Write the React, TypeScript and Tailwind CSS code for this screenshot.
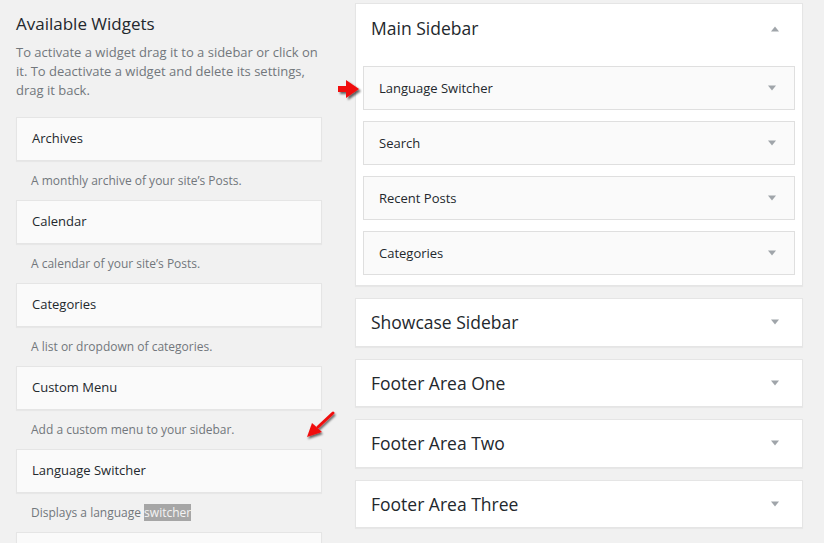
import React from "react";

const font = "font-['Open_Sans',_'Noto_Sans',_sans-serif]";

function Caret({ up = false }: { up?: boolean }) {
  return (
    <svg width="10" height="6" viewBox="0 0 10 6" className="shrink-0">
      {up ? (
        <path d="M1 5.5 L5 0.5 L9 5.5 Z" fill="#a0a5aa" />
      ) : (
        <path d="M1 0.5 L9 0.5 L5 5.5 Z" fill="#a0a5aa" />
      )}
    </svg>
  );
}

const available = [
  { t: "Archives", d: "A monthly archive of your site’s Posts." },
  { t: "Calendar", d: "A calendar of your site’s Posts." },
  { t: "Categories", d: "A list or dropdown of categories." },
  { t: "Custom Menu", d: "Add a custom menu to your sidebar." },
  { t: "Language Switcher", d: "LANG" },
  { t: "", d: "" },
];

const mainWidgets = ["Language Switcher", "Search", "Recent Posts", "Categories"];
const sidebars = ["Showcase Sidebar", "Footer Area One", "Footer Area Two", "Footer Area Three"];

export default function App() {
  return (
    <div className={`relative w-[824px] h-[543px] overflow-hidden bg-[#f1f1f1] ${font}`}>
      <div className="flex gap-[33px] pl-4">
        {/* Left column */}
        <div className="w-[306px] shrink-0 flex flex-col">
          <h2 className="mt-[11px] text-[17px] leading-[26px] text-[#23282d] font-normal">Available Widgets</h2>
          <p className="mt-[6px] text-[13px] leading-[19px] text-[#72777c]">
            To activate a widget drag it to a sidebar or click on it. To deactivate a widget and delete its settings, drag it back.
          </p>
          <div className="mt-[17px] flex flex-col">
            {available.map((w, i) => (
              <div key={i} className="flex flex-col">
                <div className="h-[44px] flex items-center px-[15px] bg-[#fafafa] border border-[#e5e5e5] shadow-[0_1px_1px_rgba(0,0,0,0.04)] text-[13px] text-[#23282d]">
                  {w.t}
                </div>
                {w.d !== "" && (
                  <div className="h-[39px] flex items-center pl-[15px] text-[12px] text-[#72777c]">
                    {w.d === "LANG" ? (
                      <span>
                        Displays a language <span className="bg-[#a6a6a6] text-[#f4f4f4]">switcher</span>
                      </span>
                    ) : (
                      w.d
                    )}
                  </div>
                )}
              </div>
            ))}
          </div>
        </div>

        {/* Right column */}
        <div className="w-[448px] shrink-0 flex flex-col gap-[12px] pt-[3px]">
          <div className="bg-white border border-[#e5e5e5] shadow-[0_1px_1px_rgba(0,0,0,0.04)] flex flex-col">
            <div className="h-[49px] flex items-center justify-between pl-[15px] pr-[22px]">
              <h2 className="text-[17.5px] text-[#23282d] font-normal">Main Sidebar</h2>
              <Caret up />
            </div>
            <div className="mt-[13px] px-[7px] pb-[10px] flex flex-col gap-[11px]">
              {mainWidgets.map((w) => (
                <div
                  key={w}
                  className="h-[44px] flex items-center justify-between pl-[15px] pr-[17px] bg-[#fafafa] border border-[#dfdfdf] text-[13px] text-[#23282d]"
                >
                  <span className="pt-[2px]">{w}</span>
                  <Caret />
                </div>
              ))}
            </div>
          </div>
          {sidebars.map((s) => (
            <div
              key={s}
              className="h-[48.5px] bg-white border border-[#e5e5e5] shadow-[0_1px_1px_rgba(0,0,0,0.04)] flex items-center justify-between pl-[15px] pr-[22px]"
            >
              <h3 className="text-[17.5px] text-[#23282d] font-normal">{s}</h3>
              <Caret />
            </div>
          ))}
        </div>
      </div>

      {/* Red annotation arrows */}
      <svg className="absolute left-[334px] top-[76px]" width="32" height="28" viewBox="0 0 32 28">
        <defs>
          <filter id="sh1" x="-30%" y="-30%" width="180%" height="180%">
            <feDropShadow dx="2" dy="2" stdDeviation="1.2" floodColor="#000" floodOpacity="0.6" />
          </filter>
        </defs>
        <path d="M4 10 L12 10 L12 4 L25 13 L12 22 L12 16 L4 16 Z" fill="#f01010" filter="url(#sh1)" />
      </svg>
      <svg className="absolute left-[300px] top-[406px]" width="42" height="40" viewBox="0 0 42 40">
        <defs>
          <filter id="sh2" x="-30%" y="-30%" width="180%" height="180%">
            <feDropShadow dx="1" dy="2" stdDeviation="1.2" floodColor="#000" floodOpacity="0.6" />
          </filter>
        </defs>
        <g filter="url(#sh2)">
          <path d="M33 7 L18 21" stroke="#f01010" strokeWidth="3" strokeLinecap="round" />
          <path d="M7 31 L12 17 L22 26 Z" fill="#f01010" />
        </g>
      </svg>
    </div>
  );
}
